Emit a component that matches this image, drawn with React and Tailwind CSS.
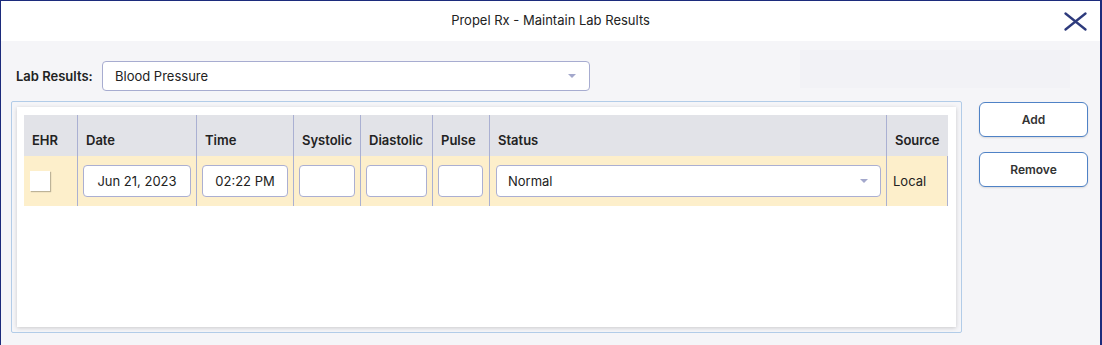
import React from "react";

const font = { fontFamily: "Inter, 'Liberation Sans', sans-serif" };

function Arrow() {
  return (
    <span className="w-0 h-0 border-x-[4px] border-x-transparent border-t-[4px] border-t-[#a3a8cc]" />
  );
}

const cols = [
  { name: "EHR", w: "w-[53px]", first: true },
  { name: "Date", w: "w-[119px]" },
  { name: "Time", w: "w-[97px]" },
  { name: "Systolic", w: "w-[67px]" },
  { name: "Diastolic", w: "w-[72px]" },
  { name: "Pulse", w: "w-[57px]" },
  { name: "Status", w: "w-[397px]" },
  { name: "Source", w: "w-[62px]" },
];

function Input({ value, center }) {
  return (
    <div
      className={`h-[32px] w-full rounded-[4px] border border-[#abafd2] bg-white flex items-center pt-[2px] text-[13px] text-[#222] ${
        center ? "justify-center" : "px-3"
      }`}
    >
      {value}
    </div>
  );
}

export default function App() {
  return (
    <div
      style={font}
      className="w-[1102px] h-[345px] overflow-hidden border-l border-t border-r-2 border-[#1c2b7c] bg-[#f5f5f8] flex flex-col"
    >
      {/* Header */}
      <div className="h-[40px] bg-white grid grid-cols-[1fr_auto_1fr] items-center shrink-0">
        <div />
        <div className="text-[13px] text-[#222]">Propel Rx - Maintain Lab Results</div>
        <div className="flex justify-end pr-[13px]">
          <svg width="23" height="19" viewBox="0 0 23 19">
            <path d="M1.5 1.5 L21.5 17.5 M21.5 1.5 L1.5 17.5" stroke="#2d3a7c" strokeWidth="2.3" strokeLinecap="round" />
          </svg>
        </div>
      </div>

      {/* Body */}
      <div className="flex-1 flex flex-col pl-[10px] pt-[20px]">
        {/* Row 1 */}
        <div className="flex items-center h-[30px]">
          <div className="pl-[5px] pt-[2px] w-[91px] text-[13px] font-semibold text-[#222]">Lab Results:</div>
          <div className="w-[488px] h-[30px] rounded-[4px] border border-[#a7acd0] bg-white flex items-center justify-between pl-[12px] pr-[13px] text-[13px] text-[#222]">
            <span className="pt-[2px]">Blood Pressure</span>
            <Arrow />
          </div>
          <div className="ml-[210px] w-[270px] h-[38px] mb-[14px] bg-[#f2f2f6]" />
        </div>

        {/* Row 2 */}
        <div className="flex mt-[10px] gap-[17px]">
          <div className="w-[951px] h-[232px] border border-[#b2cce8] rounded-[2px] p-[5px]">
            <div className="w-full h-full bg-white shadow-[0_1px_4px_rgba(0,0,0,0.18)] pl-[7px] pt-[8px]">
              <div className="w-[924px]">
                <div className="flex h-[41px] bg-[#e2e3e8]">
                  {cols.map((c) => (
                    <div
                      key={c.name}
                      className={`${c.w} ${c.first ? "pl-2" : "border-l border-[#aab0d2] pl-2"} flex items-center pt-[11px] text-[13px] font-semibold text-[#222]`}
                    >
                      {c.name}
                    </div>
                  ))}
                </div>
                <div className="flex h-[50px] bg-[#fdefcb] border-r border-[#aab0d2]">
                  <div className="w-[53px] flex items-center pl-[6px]">
                    <div className="w-[20px] h-[20px] bg-white shadow-[1px_1px_1px_rgba(0,0,0,0.25)]" />
                  </div>
                  <div className="w-[119px] border-l border-[#aab0d2] flex items-center px-[5px]">
                    <Input value="Jun 21, 2023" center />
                  </div>
                  <div className="w-[97px] border-l border-[#aab0d2] flex items-center px-[5px]">
                    <Input value="02:22 PM" center />
                  </div>
                  <div className="w-[67px] border-l border-[#aab0d2] flex items-center px-[5px]">
                    <Input value="" />
                  </div>
                  <div className="w-[72px] border-l border-[#aab0d2] flex items-center px-[5px]">
                    <Input value="" />
                  </div>
                  <div className="w-[57px] border-l border-[#aab0d2] flex items-center pl-[5px] pr-[6px]">
                    <Input value="" />
                  </div>
                  <div className="w-[397px] border-l border-[#aab0d2] flex items-center pl-[6px] pr-[5px]">
                    <div className="h-[32px] w-full rounded-[4px] border border-[#abafd2] bg-white flex items-center justify-between pl-[11px] pr-[12px] text-[13px] text-[#222]">
                      <span className="pt-[2px]">Normal</span>
                      <Arrow />
                    </div>
                  </div>
                  <div className="w-[61px] border-l border-[#aab0d2] flex items-center pl-[6px] pt-[2px] text-[13px] text-[#222]">
                    Local
                  </div>
                </div>
              </div>
            </div>
          </div>

          <div className="flex flex-col gap-[15px] pt-[1px]">
            <button className="w-[109px] h-[35px] rounded-[6px] border border-[#4f82c6] bg-white text-[12px] font-semibold text-[#333] shadow-[0_1px_2px_rgba(0,0,0,0.12)]">
              Add
            </button>
            <button className="w-[109px] h-[35px] rounded-[6px] border border-[#4f82c6] bg-white text-[12px] font-semibold text-[#333] shadow-[0_1px_2px_rgba(0,0,0,0.12)]">
              Remove
            </button>
          </div>
        </div>
      </div>
    </div>
  );
}
